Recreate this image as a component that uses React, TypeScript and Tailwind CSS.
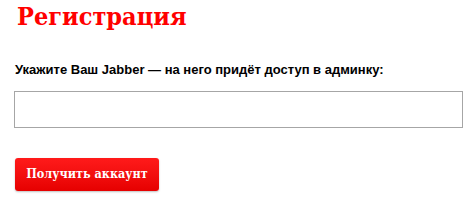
export default function App() {
  return (
    <div className="w-[474px] h-[205px] bg-white px-[15px] pt-[2px]">
      <h1 className="text-[25px] leading-[30px] font-bold text-[#ff0000] pl-[2px] font-['DejaVu_Serif_Condensed']">
        Регистрация
      </h1>
      <p className="mt-[30px] text-[13px] leading-[16px] font-bold text-black font-['Liberation_Sans']">
        Укажите Ваш Jabber — на него придёт доступ в админку:
      </p>
      <input
        type="text"
        className="mt-[13px] block w-[449px] h-[37px] border-[1.5px] border-[#a6a6a6] bg-white -ml-[1px] outline-none"
      />
      <button className="mt-[30px] w-[144px] h-[33px] rounded-[3px] bg-gradient-to-b from-[#ff1a1a] to-[#e60000] text-white text-[12.5px] font-bold whitespace-nowrap font-['DejaVu_Serif_Condensed'] shadow-[0_1px_2px_rgba(0,0,0,0.25)]">
        Получить аккаунт
      </button>
    </div>
  )
}
